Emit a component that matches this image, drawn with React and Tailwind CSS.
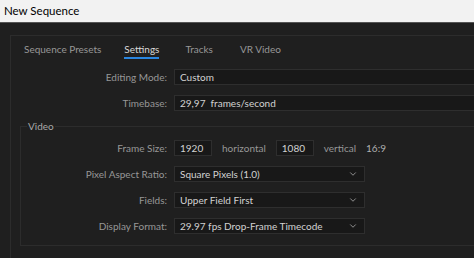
import React from 'react'
import { ChevronDown } from 'lucide-react'

const font = { fontFamily: '"Lato", "Noto Sans", sans-serif' }

const Label = ({ children, w }) => (
  <div className={`${w} shrink-0 text-right pr-[7px] text-[#979797]`}>{children}</div>
)

const Box = ({ children, className = '' }) => (
  <div className={`h-[16px] flex items-center bg-[#181818] border border-[#2e2e2e] px-[5px] text-[#d2d2d2] ${className}`}>
    {children}
  </div>
)

const Select = ({ value }) => (
  <Box className="w-[191px] justify-between">
    <span>{value}</span>
    <ChevronDown className="w-[10px] h-[10px] text-[#a5a5a5] mr-[1px]" strokeWidth={2} />
  </Box>
)

const App = () => {
  return (
    <div className="w-[474px] h-[258px] overflow-hidden bg-[#1f1f1f] text-[10px] leading-none" style={font}>
      <div className="h-[23px] bg-[#f2f2f2] border-b border-[#555] flex items-center pl-[4px] text-[11.5px] text-black">
        New Sequence
      </div>
      <div className="pl-[10px] pt-[12px]">
        <div className="border-l border-t border-[#2c2c2c] h-[230px]">
          <div className="h-[28px] flex items-start pt-[8px] pl-[13px] text-[#979797]">
            <span>Sequence Presets</span>
            <span className="ml-[23px] text-[#d8d8d8] border-b-2 border-[#2a86e0] pb-[3px]">Settings</span>
            <span className="ml-[26px]">Tracks</span>
            <span className="ml-[27px]">VR Video</span>
          </div>
          <div className="h-[26px] flex items-center">
            <Label w="w-[163px]">Editing Mode:</Label>
            <Box className="flex-1 border-r-0">Custom</Box>
          </div>
          <div className="h-[26px] flex items-center">
            <Label w="w-[163px]">Timebase:</Label>
            <Box className="flex-1 border-r-0">29,97&nbsp;&nbsp;frames/second</Box>
          </div>
          <div className="mt-[10px] ml-[9px] border-l border-t border-b border-[#2c2c2c] pt-[8px] pb-[6px] relative">
            <span className="absolute left-[6px] top-[-6px] bg-[#1f1f1f] px-[1px] text-[#a8a8a8]">Video</span>
            <div className="h-[26px] flex items-center">
              <Label w="w-[153px]">Frame Size:</Label>
              <Box className="w-[38px]">1920</Box>
              <span className="ml-[10px] text-[#979797]">horizontal</span>
              <Box className="w-[38px] ml-[10px]">1080</Box>
              <span className="ml-[10px] text-[#979797]">vertical</span>
              <span className="ml-[10px] text-[#b0b0b0]">16:9</span>
            </div>
            <div className="h-[26px] flex items-center">
              <Label w="w-[153px]">Pixel Aspect Ratio:</Label>
              <Select value="Square Pixels (1.0)" />
            </div>
            <div className="h-[26px] flex items-center">
              <Label w="w-[153px]">Fields:</Label>
              <Select value="Upper Field First" />
            </div>
            <div className="h-[26px] flex items-center">
              <Label w="w-[153px]">Display Format:</Label>
              <Select value="29.97 fps Drop-Frame Timecode" />
            </div>
          </div>
        </div>
      </div>
    </div>
  )
}

export default App
